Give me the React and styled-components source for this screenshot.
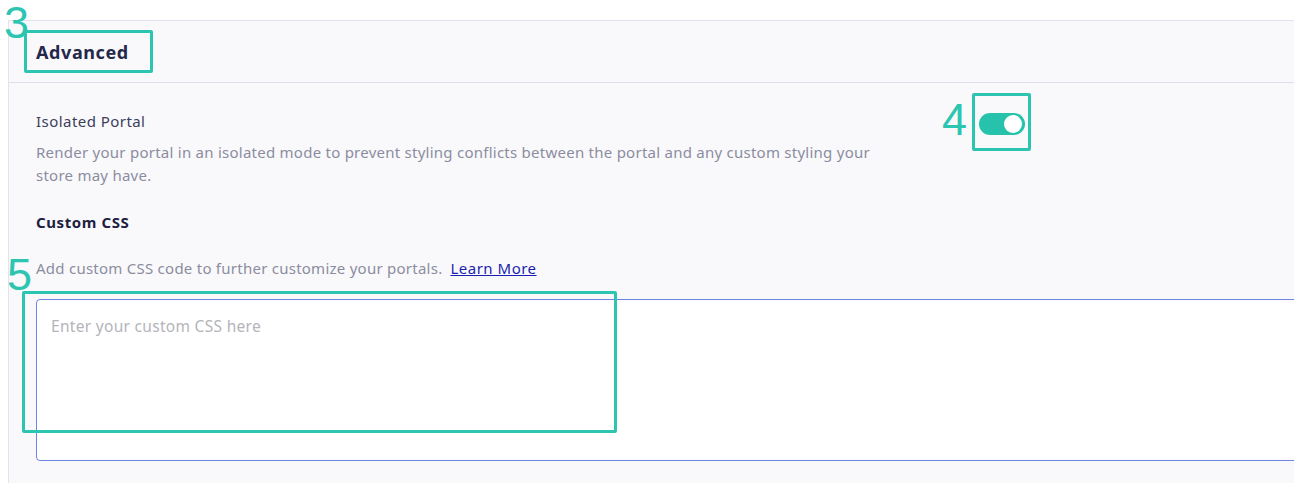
import React from 'react';
import styled, { createGlobalStyle } from 'styled-components';

const GlobalStyle = createGlobalStyle`
  html, body {
    margin: 0;
    background: #ffffff;
    overflow: hidden;
  }
  body {
    font-family: "Noto Sans", "Open Sans", sans-serif;
  }
`;

const Page = styled.div`
  position: relative;
  width: 1294px;
  height: 483px;
  padding: 20px 0 0 8px;
  box-sizing: border-box;
  overflow: hidden;
`;

const Panel = styled.section`
  width: 1400px;
  height: 100%;
  background: #f9f9fb;
  border-top: 1px solid #e1e3ef;
  border-left: 1px solid #e1e3ef;
`;

const PanelHeader = styled.div`
  height: 61px;
  display: flex;
  align-items: center;
  padding-left: 27px;
  border-bottom: 1px solid #dcdfee;

  h2 {
    margin: 0;
    font-size: 18px;
    font-weight: 700;
    color: #25284a;
    letter-spacing: 0.6px;
  }
`;

const PanelBody = styled.div`
  padding: 27px 0 0 27px;
  font-size: 15px;
  line-height: 23px;
  letter-spacing: 0.25px;
`;

const SettingRow = styled.div`
  display: grid;
  grid-template-columns: 872px auto;
  column-gap: 71px;
  align-items: start;
`;

const Label = styled.p`
  margin: 0;
  color: ${p => (p.$strong ? '#1d2040' : '#3b3e5c')};
  font-weight: ${p => (p.$strong ? 700 : 400)};
  letter-spacing: ${p => (p.$strong ? '0.6px' : '0.45px')};
`;

const Hint = styled.p`
  margin: ${p => p.$top || 8}px 0 0;
  color: #8b8d9f;

  a {
    color: #1b1fae;
    text-decoration: underline;
    margin-left: 8px;
    letter-spacing: 0.5px;
  }
`;

const Toggle = styled.div`
  margin-top: 3px;
  width: 46px;
  height: 22px;
  border-radius: 11px;
  background: #27c2ac;
  display: flex;
  align-items: center;
  justify-content: ${p => (p.$on ? 'flex-end' : 'flex-start')};
  padding: 0 3px;
  box-sizing: border-box;

  &::after {
    content: '';
    width: 18px;
    height: 18px;
    border-radius: 50%;
    background: #ffffff;
  }
`;

const Block = styled.div`
  margin-top: 24px;
`;

const CodeArea = styled.textarea`
  display: block;
  margin-top: 19px;
  width: 1320px;
  height: 162px;
  box-sizing: border-box;
  border: 1px solid #6d85e0;
  border-radius: 4px;
  background: #ffffff;
  padding: 15px 14px;
  font-family: inherit;
  font-size: 15.5px;
  line-height: 22px;
  letter-spacing: 0.3px;
  resize: none;
  outline: none;

  &::placeholder {
    color: #b4b4ba;
  }
`;

const Marker = styled.div`
  position: absolute;
  left: ${p => p.$x}px;
  top: ${p => p.$y}px;
  width: ${p => p.$w}px;
  height: ${p => p.$h}px;
  border: 3px solid #2cc5b1;
  border-radius: 2px;
  box-sizing: border-box;
  pointer-events: none;
`;

const MarkerNum = styled.span`
  position: absolute;
  left: ${p => p.$x}px;
  top: ${p => p.$y}px;
  font-family: "Liberation Sans", Arial, sans-serif;
  font-size: 45px;
  line-height: 1;
  font-weight: 400;
  color: #2cc5b1;
  pointer-events: none;
`;

export default function App() {
  return (
    <>
      <GlobalStyle />
      <Page>
        <Panel>
          <PanelHeader>
            <h2>Advanced</h2>
          </PanelHeader>
          <PanelBody>
            <SettingRow>
              <div>
                <Label>Isolated Portal</Label>
                <Hint>
                  Render your portal in an isolated mode to prevent styling conflicts between the portal and any custom styling your store may have.
                </Hint>
              </div>
              <Toggle $on />
            </SettingRow>
            <Block>
              <Label $strong>Custom CSS</Label>
              <Hint $top={23}>
                Add custom CSS code to further customize your portals.
                <a href="#">Learn More</a>
              </Hint>
              <CodeArea placeholder="Enter your custom CSS here" />
            </Block>
          </PanelBody>
        </Panel>

        <MarkerNum $x={4} $y={0}>3</MarkerNum>
        <Marker $x={24} $y={30} $w={129} $h={43} />
        <MarkerNum $x={942} $y={97}>4</MarkerNum>
        <Marker $x={972} $y={93} $w={59} $h={58} />
        <MarkerNum $x={7} $y={252}>5</MarkerNum>
        <Marker $x={22} $y={291} $w={595} $h={142} />
      </Page>
    </>
  );
}
